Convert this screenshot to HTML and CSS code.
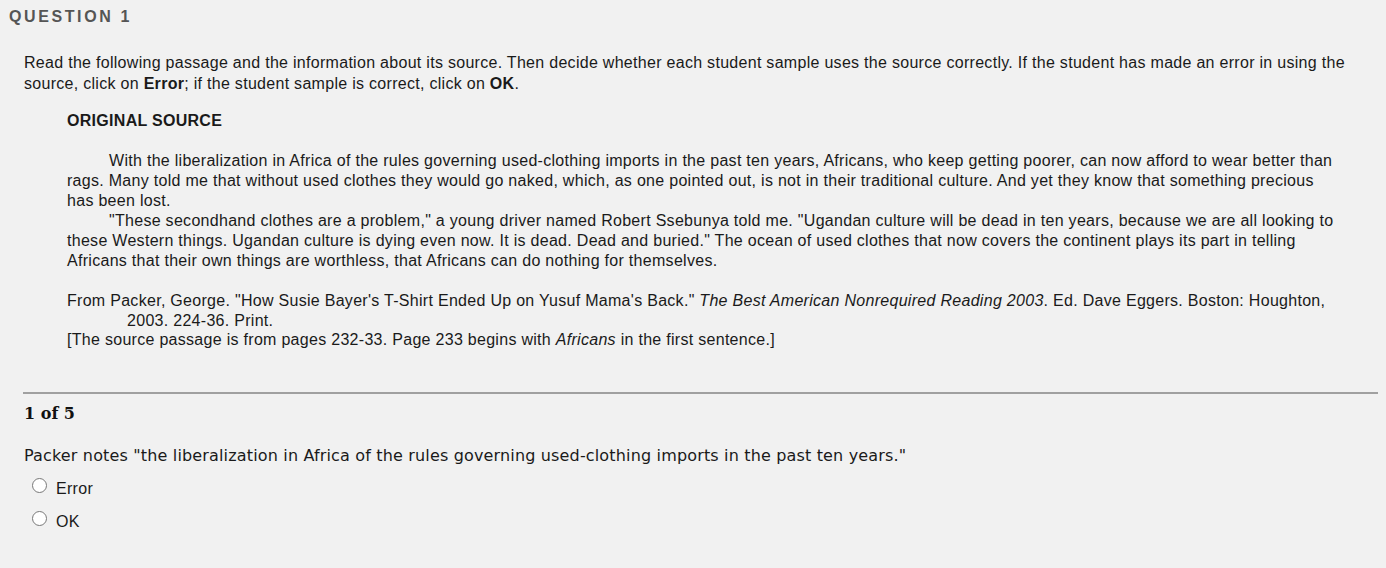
FILE: index.html
```html
<!DOCTYPE html>
<html>
<head>
<meta charset="utf-8">
<link rel="stylesheet" href="styles.css">
</head>
<body>
<div class="page">
  <h1 class="qtitle">QUESTION 1</h1>
  <div class="content">
    <p class="instructions">Read the following passage and the information about its source. Then decide whether each student sample uses the source correctly. If the student has made an error in using the source, click on <b>Error</b>; if the student sample is correct, click on <b>OK</b>.</p>
    <div class="source">
      <h2 class="source-title">ORIGINAL SOURCE</h2>
      <p class="para">With the liberalization in Africa of the rules governing used-clothing imports in the past ten years, Africans, who keep getting poorer, can now afford to wear better than rags. Many told me that without used clothes they would go naked, which, as one pointed out, is not in their traditional culture. And yet they know that something precious has been lost.</p>
      <p class="para">"These secondhand clothes are a problem," a young driver named Robert Ssebunya told me. "Ugandan culture will be dead in ten years, because we are all looking to these Western things. Ugandan culture is dying even now. It is dead. Dead and buried." The ocean of used clothes that now covers the continent plays its part in telling Africans that their own things are worthless, that Africans can do nothing for themselves.</p>
      <p class="citation">From Packer, George. "How Susie Bayer's T-Shirt Ended Up on Yusuf Mama's Back." <i>The Best American Nonrequired Reading 2003</i>. Ed. Dave Eggers. Boston: Houghton, 2003. 224-36. Print.</p>
      <p class="note">[The source passage is from pages 232-33. Page 233 begins with <i>Africans</i> in the first sentence.]</p>
    </div>
  </div>
  <hr class="divider">
  <div class="item">
    <h3 class="counter">1 of 5</h3>
    <p class="prompt">Packer notes "the liberalization in Africa of the rules governing used-clothing imports in the past ten years."</p>
    <div class="choices">
      <label class="choice"><input type="radio" name="q1"><span>Error</span></label>
      <label class="choice"><input type="radio" name="q1"><span>OK</span></label>
    </div>
  </div>
</div>
</body>
</html>
```

FILE: styles.css
```css
html, body {
  margin: 0;
  padding: 0;
  background: #f1f1f1;
}
.page {
  width: 1386px;
  min-height: 568px;
  font-family: "Liberation Sans", Arial, sans-serif;
  color: #1a1a1a;
  letter-spacing: 0.29px;
}
.qtitle {
  margin: 0;
  padding: 8px 0 0 9px;
  font-size: 16px;
  line-height: 18px;
  font-weight: bold;
  letter-spacing: 2.6px;
  color: #555;
}
.content {
  padding: 26px 24px 0 24px;
}
.instructions {
  margin: 0;
  font-size: 16px;
  line-height: 21px;
}
.source {
  margin: 17px 22px 0 43px;
}
.source-title {
  margin: 0;
  font-size: 16px;
  line-height: 20px;
  font-weight: bold;
}
.para {
  margin: 0;
  font-size: 16px;
  line-height: 20px;
  text-indent: 42px;
}
.source-title + .para {
  margin-top: 20px;
}
.citation {
  margin: 20px 0 0 0;
  font-size: 16px;
  line-height: 20px;
  padding-left: 60px;
  text-indent: -60px;
}
.note {
  margin: -1px 0 0 0;
  font-size: 16px;
  line-height: 20px;
}
.divider {
  margin: 42px 8px 0 23px;
  border: 0;
  border-top: 2px solid #a0a0a0;
  height: 0;
}
.item {
  padding: 10px 24px 0 24px;
}
.counter {
  margin: 0;
  font-family: "DejaVu Serif", Georgia, serif;
  font-size: 16px;
  line-height: 20px;
  font-weight: bold;
  color: #111;
  letter-spacing: 0;
}
.prompt {
  margin: 22px 0 0 0;
  font-family: "DejaVu Sans", Verdana, sans-serif;
  font-size: 16px;
  line-height: 20px;
  letter-spacing: 0.16px;
  color: #1a1a1a;
}
.choices {
  margin-top: 10px;
}
.choice {
  display: flex;
  align-items: flex-start;
  gap: 9px;
  margin-left: 8px;
  height: 33px;
  font-size: 16px;
}
.choice input {
  margin: 2px 0 0 0;
  width: 15px;
  height: 15px;
}
.choice span {
  line-height: 20px;
  padding-top: 3px;
}
```
